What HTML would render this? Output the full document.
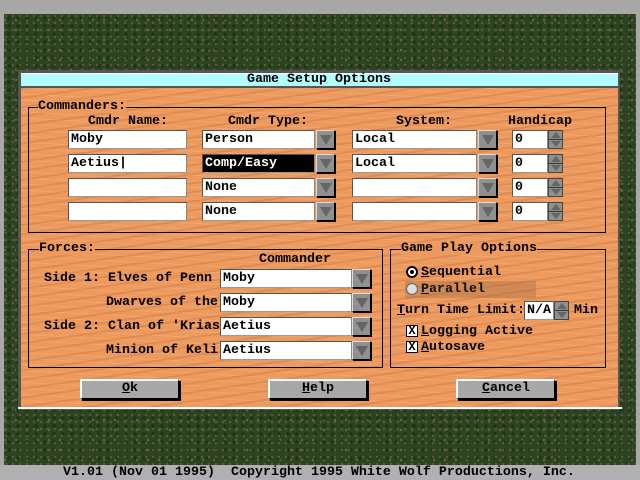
<!DOCTYPE html>
<html><head><meta charset="utf-8"><style>
*{margin:0;padding:0;box-sizing:border-box}
body{width:640px;height:480px;background:#a8a8a8;position:relative;overflow:hidden;font-family:"Liberation Mono",monospace;font-weight:bold;font-size:13.33px;color:#000}
.a{position:absolute;white-space:pre;line-height:14px}
#green{position:absolute;left:4px;top:14px;width:632px;height:451px;background:#2c4220;
background-image:radial-gradient(circle at 2px 2px,#5a5a3a 1px,transparent 1.5px),radial-gradient(circle at 5px 4px,#123a0c 1.5px,transparent 2px),radial-gradient(circle at 1px 6px,#6b6440 1px,transparent 1.5px);
background-size:7px 7px,9px 8px,11px 10px}
#status{position:absolute;left:0;top:465px;width:640px;height:15px;background:#b0b0b0}
#dlg{position:absolute;left:18px;top:70px;width:602px;height:340px;background:#555}
#title{position:absolute;left:21px;top:73px;width:597px;height:13px;background:#b4fcfc;border-top:1px solid #fff}
#body{position:absolute;left:21px;top:88px;width:597px;height:319px;background:#ec9a5e;
background-image:repeating-linear-gradient(172deg,rgba(200,110,60,.35) 0 2px,transparent 2px 9px),repeating-linear-gradient(3deg,rgba(255,190,140,.3) 0 1px,transparent 1px 6px)}
#wline{position:absolute;left:18px;top:407px;width:604px;height:2px;background:#fff}
.grp{position:absolute;border:1px solid #000}
.gt{position:absolute;background:transparent;line-height:12px}
.in{position:absolute;height:19px;background:#fff;border:1px solid #555;border-right-color:#888;border-bottom-color:#999;padding-left:2px;line-height:17px}
.dd{position:absolute;width:19px;height:19px;background:#909090;border:1px solid #000;border-top-color:#ddd;border-left-color:#ddd;box-shadow:1px 1px 0 #000}
.dd:after{content:"";position:absolute;left:3px;top:4px;border-left:6px solid transparent;border-right:6px solid transparent;border-top:10px solid #666}
.sp{position:absolute;width:15px;height:19px;background:#909090;border:1px solid #444}
.sp:before{content:"";position:absolute;left:2px;top:1px;border-left:5px solid transparent;border-right:5px solid transparent;border-bottom:6px solid #666}
.sp:after{content:"";position:absolute;left:2px;top:10px;border-left:5px solid transparent;border-right:5px solid transparent;border-top:6px solid #666;}
.sp i{position:absolute;left:0;top:8px;width:13px;height:1px;background:#333}
.btn{position:absolute;width:99px;height:20px;background:#a8a8a8;border:1px solid #000;border-top:2px solid #fff;border-left:2px solid #fff;box-shadow:2px 2px 0 #000;text-align:center;line-height:16px}
u{text-decoration:underline}
.cb{position:absolute;width:12px;height:12px;background:#fff;border:1px solid #000;font-size:12px;line-height:10px;text-align:center}
</style></head><body>
<div id="green"></div>
<div id="status"></div>
<div class="a" style="left:63px;top:466px">V1.01 (Nov 01 1995)  Copyright 1995 White Wolf Productions, Inc.</div>
<div id="dlg"></div>
<div id="title"></div>
<div class="a" style="left:247px;top:73px">Game Setup Options</div>
<div id="body"></div>
<div id="wline"></div>

<div class="grp" style="left:28px;top:107px;width:578px;height:126px"></div>
<div class="gt a" style="left:38px;top:101px;background:#ec9a5e">Commanders:</div>
<div class="a" style="left:88px;top:115px">Cmdr Name:</div>
<div class="a" style="left:228px;top:115px">Cmdr Type:</div>
<div class="a" style="left:396px;top:115px">System:</div>
<div class="a" style="left:508px;top:115px">Handicap</div>

<div class="in" style="left:68px;top:130px;width:119px">Moby</div>
<div class="in" style="left:68px;top:154px;width:119px">Aetius|</div>
<div class="in" style="left:68px;top:178px;width:119px"></div>
<div class="in" style="left:68px;top:202px;width:119px"></div>

<div class="in" style="left:202px;top:130px;width:113px">Person</div>
<div class="in" style="left:202px;top:154px;width:113px;background:#000;color:#fff">Comp/Easy</div>
<div class="in" style="left:202px;top:178px;width:113px">None</div>
<div class="in" style="left:202px;top:202px;width:113px">None</div>
<div class="dd" style="left:316px;top:130px"></div>
<div class="dd" style="left:316px;top:154px"></div>
<div class="dd" style="left:316px;top:178px"></div>
<div class="dd" style="left:316px;top:202px"></div>

<div class="in" style="left:352px;top:130px;width:125px">Local</div>
<div class="in" style="left:352px;top:154px;width:125px">Local</div>
<div class="in" style="left:352px;top:178px;width:125px"></div>
<div class="in" style="left:352px;top:202px;width:125px"></div>
<div class="dd" style="left:478px;top:130px"></div>
<div class="dd" style="left:478px;top:154px"></div>
<div class="dd" style="left:478px;top:178px"></div>
<div class="dd" style="left:478px;top:202px"></div>

<div class="in" style="left:512px;top:130px;width:36px">0</div>
<div class="in" style="left:512px;top:154px;width:36px">0</div>
<div class="in" style="left:512px;top:178px;width:36px">0</div>
<div class="in" style="left:512px;top:202px;width:36px">0</div>
<div class="sp" style="left:548px;top:130px"><i></i></div>
<div class="sp" style="left:548px;top:154px"><i></i></div>
<div class="sp" style="left:548px;top:178px"><i></i></div>
<div class="sp" style="left:548px;top:202px"><i></i></div>

<div class="grp" style="left:28px;top:249px;width:355px;height:119px"></div>
<div class="gt a" style="left:39px;top:243px;background:#ec9a5e">Forces:</div>
<div class="a" style="left:259px;top:253px">Commander</div>
<div class="a" style="left:44px;top:272px">Side 1: Elves of Penn</div>
<div class="a" style="left:106px;top:296px">Dwarves of the</div>
<div class="a" style="left:44px;top:320px">Side 2: Clan of 'Krias</div>
<div class="a" style="left:106px;top:344px">Minion of Keli</div>
<div class="in" style="left:220px;top:269px;width:132px">Moby</div>
<div class="in" style="left:220px;top:293px;width:132px">Moby</div>
<div class="in" style="left:220px;top:317px;width:132px">Aetius</div>
<div class="in" style="left:220px;top:341px;width:132px">Aetius</div>
<div class="dd" style="left:352px;top:269px"></div>
<div class="dd" style="left:352px;top:293px"></div>
<div class="dd" style="left:352px;top:317px"></div>
<div class="dd" style="left:352px;top:341px"></div>

<div class="grp" style="left:390px;top:249px;width:216px;height:119px"></div>
<div class="gt a" style="left:401px;top:243px;background:#ec9a5e">Game Play Options</div>
<div style="position:absolute;left:406px;top:266px;width:12px;height:12px;border-radius:50%;background:#fff;border:2px solid #000"><div style="position:absolute;left:2px;top:2px;width:4px;height:4px;border-radius:50%;background:#000"></div></div>
<div class="a" style="left:421px;top:266px"><u>S</u>equential</div>
<div style="position:absolute;left:405px;top:281px;width:131px;height:17px;background-image:radial-gradient(#8a5a3a 0.7px,transparent 0.8px);background-size:2px 2px"></div>
<div style="position:absolute;left:406px;top:283px;width:12px;height:12px;border-radius:50%;background:#ddd;border:1px solid #666"></div>
<div class="a" style="left:421px;top:283px;color:#111"><u>P</u>arallel</div>
<div class="a" style="left:397px;top:304px"><u>T</u>urn Time Limit:</div>
<div class="in" style="left:524px;top:301px;width:30px">N/A</div>
<div class="sp" style="left:554px;top:301px"><i></i></div>
<div class="a" style="left:574px;top:304px">Min</div>
<div class="cb" style="left:406px;top:325px">X</div>
<div class="a" style="left:421px;top:325px"><u>L</u>ogging Active</div>
<div class="cb" style="left:406px;top:341px">X</div>
<div class="a" style="left:421px;top:341px"><u>A</u>utosave</div>

<div class="btn" style="left:80px;top:379px"><u>O</u>k</div>
<div class="btn" style="left:268px;top:379px"><u>H</u>elp</div>
<div class="btn" style="left:456px;top:379px"><u>C</u>ancel</div>
</body></html>
